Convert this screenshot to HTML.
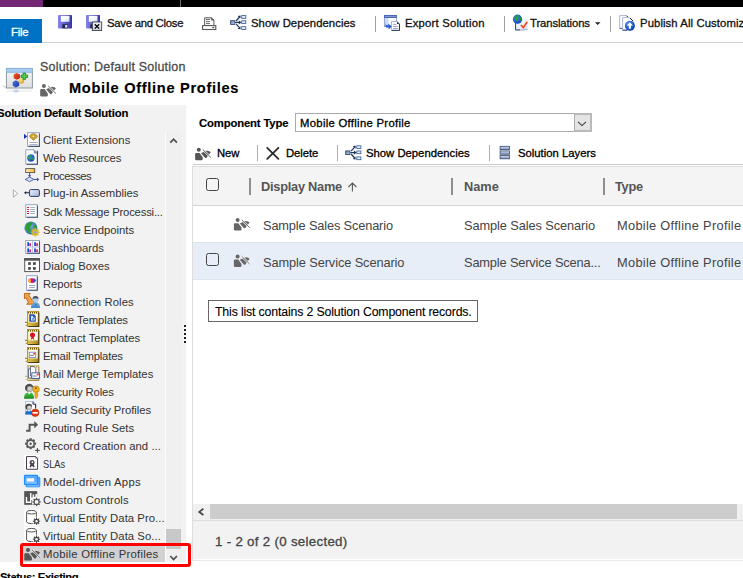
<!DOCTYPE html>
<html><head><meta charset="utf-8"><title>Solution: Default Solution</title>
<style>
html,body{margin:0;padding:0;}
body{width:743px;height:578px;overflow:hidden;position:relative;background:#fff;font-family:"Liberation Sans",sans-serif;}
.t{position:absolute;white-space:nowrap;line-height:20px;height:20px;font-family:"Liberation Sans",sans-serif;}
.b{position:absolute;}
svg{position:absolute;overflow:visible;}

</style></head>
<body>
<!-- top bar -->
<div class="b" style="left:0;top:0;width:43px;height:7px;background:#742774"></div>
<div class="b" style="left:43px;top:0;width:700px;height:7px;background:#000"></div>
<div class="b" style="left:180px;top:0;width:1px;height:7px;background:#6e6e6e"></div>
<!-- ribbon -->
<div class="b" style="left:0;top:19px;width:42px;height:24px;background:#0072c6"></div>
<div class="b" style="left:42px;top:42px;width:701px;height:1px;background:#d2d2d2"></div>
<div class="b" style="left:375px;top:16px;width:1px;height:16px;background:#a0a0a0"></div>
<div class="b" style="left:504px;top:16px;width:1px;height:16px;background:#a0a0a0"></div>
<div class="b" style="left:610px;top:16px;width:1px;height:16px;background:#a0a0a0"></div>
<!-- left nav -->
<div class="b" style="left:0;top:105px;width:186px;height:457px;background:#f2f2f2"></div>
<div class="b" style="left:165px;top:131px;width:1px;height:431px;background:#fcfcfc"></div>
<div class="b" style="left:166px;top:131px;width:16px;height:431px;background:#f0f0f0"></div>
<div class="b" style="left:166px;top:529px;width:15px;height:20px;background:#c8c8c8"></div>
<div class="b" style="left:23px;top:546px;width:142px;height:16px;background:#d1d1d1"></div>
<!-- grid -->
<div class="b" style="left:192px;top:166px;width:1px;height:395px;background:#dedede"></div>
<div class="b" style="left:295px;top:113px;width:295px;height:17px;border:1px solid #ababab;background:#fff"></div>
<div class="b" style="left:574px;top:113px;width:18px;height:19px;background:#e4e4e4;border:2px solid #bababa;border-left:1px solid #adadad;box-sizing:border-box"></div>
<div class="b" style="left:257px;top:145px;width:1px;height:16px;background:#b0b0b0"></div>
<div class="b" style="left:337px;top:145px;width:1px;height:16px;background:#b0b0b0"></div>
<div class="b" style="left:489px;top:145px;width:1px;height:16px;background:#b0b0b0"></div>
<div class="b" style="left:193px;top:164px;width:550px;height:1px;background:#c9c9c9"></div>
<div class="b" style="left:193px;top:166px;width:550px;height:40px;background:#f4f4f4;border-top:1px solid #dcdcdc;border-bottom:1px solid #d4d4d4;box-sizing:border-box"></div>
<div class="b" style="left:206px;top:178px;width:11.4px;height:11.4px;border:1.3px solid #444;border-radius:2.5px"></div>
<div class="b" style="left:249px;top:178px;width:2px;height:17px;background:#8f8f8f"></div>
<div class="b" style="left:451px;top:178px;width:2px;height:17px;background:#8f8f8f"></div>
<div class="b" style="left:603px;top:178px;width:2px;height:17px;background:#8f8f8f"></div>
<div class="b" style="left:193px;top:242px;width:550px;height:38px;background:#e7eef8;border-top:1px solid #dde4ec;border-bottom:1px solid #dde4ec;box-sizing:border-box"></div>
<div class="b" style="left:206px;top:253px;width:11.4px;height:11.4px;border:1.3px solid #444;border-radius:2.5px"></div>
<div class="b" style="left:208px;top:300px;width:268px;height:20px;border:1px solid #666;background:#fff"></div>
<!-- hscroll / footer -->
<div class="b" style="left:193px;top:504px;width:550px;height:16px;background:#f0f0f0"></div>
<div class="b" style="left:210px;top:504px;width:527px;height:15px;background:#cdcdcd"></div>
<div class="b" style="left:193px;top:520px;width:550px;height:39px;background:#f2f2f2;border-top:1px solid #dcdcdc;box-sizing:border-box"></div>
<div class="b" style="left:193px;top:560px;width:550px;height:1px;background:#e9e9e9"></div>

<svg width="743" height="578" viewBox="0 0 743 578" style="left:0;top:0">
<defs>
<linearGradient id="gfl" x1="0" y1="0" x2="1" y2="0"><stop offset="0" stop-color="#8484e6"/><stop offset=".55" stop-color="#5a5ace"/><stop offset="1" stop-color="#3434a0"/></linearGradient>
<linearGradient id="gwh" x1="0" y1="0" x2="1" y2="1"><stop offset="0" stop-color="#ffffff"/><stop offset=".6" stop-color="#f4f6fb"/><stop offset="1" stop-color="#c4cce4"/></linearGradient>
<linearGradient id="gbx" x1="0" y1="0" x2="0" y2="1"><stop offset="0" stop-color="#f6f6f6"/><stop offset="1" stop-color="#c9ccd2"/></linearGradient>
<linearGradient id="gdb" x1="0" y1="0" x2="1" y2="1"><stop offset="0" stop-color="#6782b4"/><stop offset="1" stop-color="#bccbe4"/></linearGradient>
<linearGradient id="gpp" x1="0" y1="0" x2="1" y2="1"><stop offset="0" stop-color="#ffffff"/><stop offset="1" stop-color="#d4e2f6"/></linearGradient>
<radialGradient id="ggl" cx=".4" cy=".35" r=".7"><stop offset="0" stop-color="#4a8af4"/><stop offset="1" stop-color="#0d3fc0"/></radialGradient>
<radialGradient id="ggl2" cx=".4" cy=".35" r=".7"><stop offset="0" stop-color="#86a6f0"/><stop offset="1" stop-color="#3a62cc"/></radialGradient>
<radialGradient id="gpb" cx=".35" cy=".3" r=".8"><stop offset="0" stop-color="#5d94ea"/><stop offset=".6" stop-color="#1a5acc"/><stop offset="1" stop-color="#0a3aa0"/></radialGradient>
<linearGradient id="gwn" x1="0" y1="0" x2="0" y2="1"><stop offset="0" stop-color="#f8f8f8"/><stop offset="1" stop-color="#dedede"/></linearGradient>
<linearGradient id="gtb" x1="0" y1="0" x2="0" y2="1"><stop offset="0" stop-color="#7fb2e4"/><stop offset=".4" stop-color="#b4d5f4"/><stop offset="1" stop-color="#8fbdea"/></linearGradient>
<linearGradient id="grd" x1="0" y1="0" x2="1" y2="1"><stop offset="0" stop-color="#ee5a34"/><stop offset="1" stop-color="#b82408"/></linearGradient>
<linearGradient id="gbl" x1="0" y1="0" x2="1" y2="1"><stop offset="0" stop-color="#4c78e4"/><stop offset="1" stop-color="#1636a8"/></linearGradient>
<radialGradient id="gyl" cx=".35" cy=".3" r=".8"><stop offset="0" stop-color="#ffe680"/><stop offset="1" stop-color="#e09a10"/></radialGradient>
<linearGradient id="gly" x1="0" y1="0" x2="0" y2="1"><stop offset="0" stop-color="#d4e0f4"/><stop offset="1" stop-color="#7d93be"/></linearGradient>
<linearGradient id="gor" x1="0" y1="0" x2="1" y2="0"><stop offset="0" stop-color="#fff2c8"/><stop offset="1" stop-color="#ffb41c"/></linearGradient>
<linearGradient id="gpl" x1="0" y1="0" x2="1" y2="1"><stop offset="0" stop-color="#eef3fc"/><stop offset="1" stop-color="#9fb2d6"/></linearGradient>
<linearGradient id="gps" x1="0" y1="0" x2="0" y2="1"><stop offset="0" stop-color="#86b8e4"/><stop offset="1" stop-color="#3f82c2"/></linearGradient>
<linearGradient id="gnp" x1="0" y1="0" x2="1" y2="1"><stop offset="0" stop-color="#fbf0a4"/><stop offset=".6" stop-color="#ecd058"/><stop offset="1" stop-color="#8a6a14"/></linearGradient>
<linearGradient id="gnp2" x1="0" y1="0" x2="1" y2="1"><stop offset="0" stop-color="#faf0c0"/><stop offset=".6" stop-color="#eedc98"/><stop offset="1" stop-color="#c0a868"/></linearGradient>
<linearGradient id="ggr" x1="0" y1="0" x2="0" y2="1"><stop offset="0" stop-color="#4cc44c"/><stop offset="1" stop-color="#1a8a1a"/></linearGradient>
<radialGradient id="ghd" cx=".55" cy=".55" r=".6"><stop offset="0" stop-color="#e0e0e0"/><stop offset="1" stop-color="#8c8c8c"/></radialGradient>
</defs>
<g transform="translate(58,15)"><rect x="0" y="0" width="14" height="13.6" rx=".8" fill="url(#gfl)"/><rect x="2.8" y=".8" width="8.7" height="6" fill="url(#gwh)"/><rect x="4.3" y="9.3" width="5.6" height="4" fill="#26264a"/><rect x="7.2" y="10" width="2.1" height="2.6" fill="#e8e8f4"/></g>
<g transform="translate(86,15)"><rect x="0" y="0" width="14" height="13.6" rx=".8" fill="url(#gfl)"/><rect x="2.8" y=".8" width="8.7" height="6" fill="url(#gwh)"/><rect x="4.3" y="9.3" width="5.6" height="4" fill="#26264a"/><rect x="7.2" y="10" width="2.1" height="2.6" fill="#e8e8f4"/></g>
<rect x="92.3" y="22" width="9.4" height="8.6" fill="url(#gbx)" stroke="#2a3040" stroke-width=".8"/><path d="M94.8 24.2 L99.2 28.6 M99.2 24.2 L94.8 28.6" stroke="#000" stroke-width="1.3" fill="none"/>
<path d="M204.7 25.2 V17.8 H211.6 L213.9 20 V25.2" fill="#fff" stroke="#555" stroke-width="1"/><path d="M211.4 17.6 V20.2 H214" fill="#777" stroke="#555" stroke-width=".6"/><path d="M206 19.5 H210 M206 21.6 H210 M206 23.6 H210" stroke="#555" stroke-width=".9"/><rect x="202.6" y="25.6" width="13.2" height="3.9" fill="#fff" stroke="#555" stroke-width="1.1"/><rect x="212.2" y="27.1" width="2.1" height="1" fill="#444"/>
<g transform="translate(0,0)"><rect x="230.6" y="20.7" width="4.2" height="3.7" fill="url(#gdb)" stroke="#2a3f66" stroke-width=".8"/><g fill="#e4eefb" stroke="#2f5590" stroke-width=".8"><rect x="241.7" y="15.6" width="4.1" height="2.7"/><rect x="241.7" y="20.8" width="4.1" height="2.7"/><rect x="241.7" y="26.7" width="4.1" height="2.8"/></g><g stroke="#1f3558" stroke-width="1.2" fill="none"><path d="M235.2 22.4 H240.6"/><path d="M236 21 L239.6 17"/><path d="M236 23.8 L239.6 27.8"/></g><g fill="#1f3558"><path d="M238.8 20.2 L241.4 22.4 L238.8 24.6 Z"/><path d="M237.6 15.9 L240.6 15.6 L240.4 18.6 Z"/><path d="M237.6 28.9 L240.6 29.2 L240.4 26.2 Z"/></g></g>
<rect x="384.4" y="15.4" width="12" height="11" fill="#fff" stroke="#7d95c8" stroke-width=".9"/><rect x="384" y="15" width="12.8" height="3" fill="#4a66b0"/><rect x="385" y="16" width="10.8" height=".8" fill="#8fa6dc"/><rect x="384.9" y="18.2" width="3.6" height="7.6" fill="#c9d9f6"/><path d="M391.4 21.6 H397.2 L399.5 23.9 V30.4 H391.4 Z" fill="#fdfdff" stroke="#9aa8c8" stroke-width=".9"/><path d="M399.5 23.9 V30.4 H391.8" fill="none" stroke="#223a5a" stroke-width="1"/><path d="M397 21.4 V24 H399.7 Z" fill="#223a5a"/><path d="M393.2 24.4 H396.4 M393.2 26.5 H397.8 M393.2 28.5 H397.8" stroke="#8a97b8" stroke-width=".9"/><path d="M385.2 24.6 L388.4 25.4 L388.2 23.6 L391.8 26.4 L388.6 29.4 L388.6 27.6 L386 27.4 Z" fill="#2a5bd0"/>
<path d="M515.5 18.8 H527.6 V29.4 Q522 30.4 515.5 29.9 Z" fill="url(#gpp)"/><path d="M515.6 22 V29.9 H520" fill="none" stroke="#1a3a80" stroke-width="1"/><path d="M516 30.2 Q522 30.6 527.6 29.4" stroke="#8a92a0" stroke-width=".7" fill="none"/><path d="M520.9 25 L523.3 27.6 L527.2 21.8" fill="none" stroke="#ff4218" stroke-width="1.6"/><circle cx="517.5" cy="19.2" r="4.6" fill="url(#ggl)"/><path d="M514.6 16.4 Q516.8 14.6 518.6 15.4 Q518.8 17.6 517 18.2 Q516.4 20.4 517.6 21.6 Q516 21.6 515.2 19.6 Q514 18.4 514.6 16.4 Z" fill="#23a51f"/><path d="M519.6 17.4 Q521.2 17 521.8 19 Q521.4 21 519.8 20.6 Q518.8 19 519.6 17.4 Z" fill="#1f9a1c"/>
<path d="M619.6 15.6 H626.2 L628 17.4 V28.3 H619.6 Z" fill="#fff" stroke="#9fb0d4" stroke-width=".9"/><path d="M619.6 28.4 H626" stroke="#44506a" stroke-width=".9"/><path d="M622.6 17.7 H629.6 L633 21 V30.1 H622.6 Z" fill="#fff" stroke="#9fb0d4" stroke-width=".9"/><path d="M622.6 30.2 H627" stroke="#33405a" stroke-width="1"/><path d="M626.5 15.7 L627.9 17.1 M630 18 L633.1 21.1" stroke="#222a3c" stroke-width="1"/><circle cx="629.9" cy="25.7" r="5" fill="url(#gpb)"/><path d="M629.9 22.3 L633 25.5 H631 V28.7 H628.8 V25.5 H626.8 Z" fill="#fff"/>
<path d="M594.9 22.2 H600.5 L597.7 25 Z" fill="#222"/>
<path d="M1 85 L6 86.5 V88.4 Z" fill="#d8d8d8"/><rect x="6.4" y="68.4" width="26" height="19.6" fill="url(#gwn)" stroke="#8d9a9c" stroke-width="1"/><rect x="6.4" y="68.2" width="26" height="4.2" fill="url(#gtb)"/><path d="M6.4 72.6 H32.4" stroke="#7fa6cf" stroke-width=".6"/><rect x="7" y="89.4" width="25" height="2.6" fill="#f2f2f2"/><ellipse cx="16" cy="91" rx="2.6" ry="1.6" fill="#c3cdf0"/><path d="M16.8 73 L20 74.6 V78.2 L16.8 79.8 L13.7 78.2 V74.6 Z" fill="url(#grd)"/><path d="M15.9 80.3 L19.2 82 V85.8 L15.9 87.6 L12.7 85.8 V82 Z" fill="url(#gbl)"/><circle cx="21.2" cy="81" r="2.8" fill="url(#gyl)"/><path d="M23.1 73 H25.6 V75 H27.7 V77.5 H25.6 V79.6 H23.1 V77.5 H21 V75 H23.1 Z" fill="#52c552" stroke="#1f8a2a" stroke-width=".8"/>
<g transform="translate(0,0)" fill="#666"><circle cx="43.9" cy="85.9" r="2"/><path d="M40.2 90 Q40.2 89.1 41.2 89.1 L44.6 89.1 L47.8 93.4 L47.8 95.2 Q47.8 96.4 46.4 96.4 L41.4 96.4 Q40.2 96.4 40.2 95.2 Z"/><path d="M46.1 89.3 L51.2 86.9 Q54.2 86.4 55.9 88.3 L51.4 94.2 L50.3 94.2 Z"/><path d="M47.9 85.7 L56 93.6" stroke="#fff" stroke-width="2.2" stroke-opacity=".75" fill="none"/><path d="M47.9 85.7 L56 93.6" stroke="#666" stroke-width=".9" fill="none"/></g>
<g transform="translate(154.9,63.9)" fill="#555"><circle cx="43.9" cy="85.9" r="2"/><path d="M40.2 90 Q40.2 89.1 41.2 89.1 L44.6 89.1 L47.8 93.4 L47.8 95.2 Q47.8 96.4 46.4 96.4 L41.4 96.4 Q40.2 96.4 40.2 95.2 Z"/><path d="M46.1 89.3 L51.2 86.9 Q54.2 86.4 55.9 88.3 L51.4 94.2 L50.3 94.2 Z"/><path d="M47.9 85.7 L56 93.6" stroke="#fff" stroke-width="2.2" stroke-opacity=".75" fill="none"/><path d="M47.9 85.7 L56 93.6" stroke="#555" stroke-width=".9" fill="none"/></g>
<path d="M267.2 147.8 L278.4 158.8 M278.4 147.8 L267.2 158.8" stroke="#2b2b2b" stroke-width="1.8" fill="none" stroke-linecap="round"/>
<g transform="translate(115.1,130.2)"><rect x="230.6" y="20.7" width="4.2" height="3.7" fill="url(#gdb)" stroke="#2a3f66" stroke-width=".8"/><g fill="#e4eefb" stroke="#2f5590" stroke-width=".8"><rect x="241.7" y="15.6" width="4.1" height="2.7"/><rect x="241.7" y="20.8" width="4.1" height="2.7"/><rect x="241.7" y="26.7" width="4.1" height="2.8"/></g><g stroke="#1f3558" stroke-width="1.2" fill="none"><path d="M235.2 22.4 H240.6"/><path d="M236 21 L239.6 17"/><path d="M236 23.8 L239.6 27.8"/></g><g fill="#1f3558"><path d="M238.8 20.2 L241.4 22.4 L238.8 24.6 Z"/><path d="M237.6 15.9 L240.6 15.6 L240.4 18.6 Z"/><path d="M237.6 28.9 L240.6 29.2 L240.4 26.2 Z"/></g></g>
<rect x="500.1" y="146.3" width="9.4" height="3.3" fill="url(#gly)" stroke="#3a4a68" stroke-width=".8"/>
<rect x="500.1" y="150.9" width="9.4" height="3.3" fill="url(#gly)" stroke="#3a4a68" stroke-width=".8"/>
<rect x="500.1" y="155.5" width="9.4" height="3.3" fill="url(#gly)" stroke="#3a4a68" stroke-width=".8"/>
<path d="M578 121.9 L582 125.6 L586 121.9" stroke="#3c3c3c" stroke-width="1.1" fill="none"/>
<path d="M352.4 191.4 V183 M348.4 187 L352.4 183 L356.4 187" stroke="#555" stroke-width="1.1" fill="none"/>
<g transform="translate(193.7,134.1)" fill="#666"><circle cx="43.9" cy="85.9" r="2"/><path d="M40.2 90 Q40.2 89.1 41.2 89.1 L44.6 89.1 L47.8 93.4 L47.8 95.2 Q47.8 96.4 46.4 96.4 L41.4 96.4 Q40.2 96.4 40.2 95.2 Z"/><path d="M46.1 89.3 L51.2 86.9 Q54.2 86.4 55.9 88.3 L51.4 94.2 L50.3 94.2 Z"/><path d="M47.9 85.7 L56 93.6" stroke="#fff" stroke-width="2.2" stroke-opacity=".75" fill="none"/><path d="M47.9 85.7 L56 93.6" stroke="#666" stroke-width=".9" fill="none"/></g>
<g transform="translate(193.7,170.5)" fill="#666"><circle cx="43.9" cy="85.9" r="2"/><path d="M40.2 90 Q40.2 89.1 41.2 89.1 L44.6 89.1 L47.8 93.4 L47.8 95.2 Q47.8 96.4 46.4 96.4 L41.4 96.4 Q40.2 96.4 40.2 95.2 Z"/><path d="M46.1 89.3 L51.2 86.9 Q54.2 86.4 55.9 88.3 L51.4 94.2 L50.3 94.2 Z"/><path d="M47.9 85.7 L56 93.6" stroke="#fff" stroke-width="2.2" stroke-opacity=".75" fill="none"/><path d="M47.9 85.7 L56 93.6" stroke="#666" stroke-width=".9" fill="none"/></g>
<path d="M203.4 508.8 L199.2 511.9 L203.4 515" stroke="#444" stroke-width="1.7" fill="none"/>
<path d="M170.3 142.6 L173.6 139.2 L176.9 142.6" stroke="#505050" stroke-width="1.8" fill="none"/>
<path d="M170.3 556 L173.6 559.5 L176.9 556" stroke="#505050" stroke-width="1.8" fill="none"/>
<rect x="183.3" y="324.3" width="2.7" height="2.7" fill="#fff"/><rect x="184" y="325" width="2" height="2" fill="#1c1c1c"/>
<rect x="183.3" y="328.3" width="2.7" height="2.7" fill="#fff"/><rect x="184" y="329" width="2" height="2" fill="#1c1c1c"/>
<rect x="183.3" y="332.3" width="2.7" height="2.7" fill="#fff"/><rect x="184" y="333" width="2" height="2" fill="#1c1c1c"/>
<rect x="183.3" y="336.3" width="2.7" height="2.7" fill="#fff"/><rect x="184" y="337" width="2" height="2" fill="#1c1c1c"/>
<rect x="183.3" y="340.3" width="2.7" height="2.7" fill="#fff"/><rect x="184" y="341" width="2" height="2" fill="#1c1c1c"/>
<path d="M24 133.7 L27.2 136.4 L24 139.1 Z" fill="#1a2fb0"/>
<rect x="27.6" y="132.7" width="11.8" height="13.7" fill="#fff" stroke="#8a98b8" stroke-width="0.9"/>
<path d="M39.400000000000006 133.7 V146.39999999999998 H28.6" fill="none" stroke="#44557a" stroke-width="1.1"/>
<path d="M29.6 135.6 Q31 133.6 33.4 133.4 Q35.8 133.6 37.4 135.6 Q37.8 137.8 35.4 138.8 L33.4 140.4 L31.6 138.8 Q29.2 137.8 29.6 135.6 Z" fill="#c9a233" stroke="#8a6a14" stroke-width=".5"/><circle cx="33.4" cy="136.3" r=".9" fill="#fff6d0"/><path d="M29.4 142.5 H37.6 M29.4 144.6 H37.6" stroke="#9aa4bc" stroke-width=".9"/>
<path d="M25.8 149.8 H34.0 L37.4 153.20000000000002 V164.20000000000002 H25.8 Z" fill="#fff" stroke="#8a98b8" stroke-width="0.9"/><path d="M34.0 149.8 V153.20000000000002 H37.4 Z" fill="#8a98b8" stroke="#8a98b8" stroke-width=".5"/>
<path d="M37.4 150.8 V164.20000000000002 H26.8" fill="none" stroke="#3a4a70" stroke-width="1.1"/>
<circle cx="30.9" cy="158" r="3.7" fill="url(#ggl)"/><path d="M28.4 156.4 Q30 154.8 31.6 155.4 Q31.4 157.2 30.2 157.6 Q30 159.4 31 160.6 Q29 160.4 28.4 158.6 Z" fill="#27a822"/><path d="M32.4 157.4 Q33.8 157.2 34.2 158.8 Q33.6 160.4 32.4 160 Z" fill="#27a822"/>
<rect x="25.7" y="168.6" width="9" height="4" fill="url(#gor)" stroke="#555" stroke-width=".9"/><path d="M29.6 172.8 V176.4" stroke="#3a4ab0" stroke-width="1"/><path d="M27.8 175.2 H31.4 L29.6 177.2 Z" fill="#3a4ab0"/><path d="M25.2 179.4 L29.6 177.1 L34 179.4 L29.6 181.7 Z" fill="#dcdcff" stroke="#4a60a0" stroke-width=".9"/><path d="M34 179.4 H38" stroke="#3a4ab0" stroke-width="1"/><path d="M37 177.6 L39.2 179.4 L37 181.2 Z" fill="#3a4ab0"/>
<path d="M13.4 189.8 L17.8 193.5 L13.4 197.2 Z" fill="#fff" stroke="#a6a6a6" stroke-width=".9"/><rect x="29.4" y="189.6" width="10" height="6.8" rx="1.2" fill="url(#gpl)" stroke="#2a3f66" stroke-width="1"/><path d="M25 192.7 H29.4" stroke="#1f3050" stroke-width="1"/><path d="M26.2 190.9 L24 192.7 L26.2 194.5 Z" fill="#1f3050"/>
<rect x="25.8" y="204.7" width="11.6" height="12.6" fill="#fff" stroke="#8a98b8" stroke-width="0.9"/>
<path d="M37.4 205.7 V217.29999999999998 H26.8" fill="none" stroke="#44557a" stroke-width="1.1"/>
<rect x="27" y="206.95" width="2" height=".9" fill="#e8000c"/><rect x="30.2" y="207.00" width="4.8" height=".8" fill="#8a9bbd"/>
<rect x="27" y="208.98" width="2" height=".9" fill="#e8000c"/><rect x="30.2" y="209.03" width="4.8" height=".8" fill="#8a9bbd"/>
<rect x="27" y="211.01" width="2" height=".9" fill="#e8000c"/><rect x="30.2" y="211.06" width="4.8" height=".8" fill="#8a9bbd"/>
<rect x="27" y="213.04" width="2" height=".9" fill="#e8000c"/><rect x="30.2" y="213.09" width="4.8" height=".8" fill="#8a9bbd"/>
<circle cx="30.9" cy="227.9" r="6.5" fill="url(#ggl2)"/><path d="M26 224.6 Q29 221.6 32.6 222.2 Q33.4 224.4 31 225.2 Q29.6 227.4 30.6 229.6 Q30 232 31.4 233.6 Q28 233.4 26.4 230.4 Q24.8 227.4 26 224.6 Z" fill="#2aa030"/><path d="M34 224.6 Q36.6 225 37.2 227.6 Q36.4 229.6 34.6 229 Q33 226.8 34 224.6 Z" fill="#2aa030"/>
<g transform="translate(35.3,232.3)"><rect x="-0.85" y="-4.20" width="1.7" height="2.10" fill="#e0b81e" transform="rotate(0.0)"/><rect x="-0.85" y="-4.20" width="1.7" height="2.10" fill="#e0b81e" transform="rotate(45.0)"/><rect x="-0.85" y="-4.20" width="1.7" height="2.10" fill="#e0b81e" transform="rotate(90.0)"/><rect x="-0.85" y="-4.20" width="1.7" height="2.10" fill="#e0b81e" transform="rotate(135.0)"/><rect x="-0.85" y="-4.20" width="1.7" height="2.10" fill="#e0b81e" transform="rotate(180.0)"/><rect x="-0.85" y="-4.20" width="1.7" height="2.10" fill="#e0b81e" transform="rotate(225.0)"/><rect x="-0.85" y="-4.20" width="1.7" height="2.10" fill="#e0b81e" transform="rotate(270.0)"/><rect x="-0.85" y="-4.20" width="1.7" height="2.10" fill="#e0b81e" transform="rotate(315.0)"/><circle r="3.1" fill="#e0b81e"/><circle r="1.4" fill="#8aa4e6"/></g>
<rect x="25.7" y="240.6" width="13.8" height="12.7" fill="#fff" stroke="#8a9ab8" stroke-width=".9"/>
<path d="M39.5 241.6 V253.29999999999998 H26.7" fill="none" stroke="#44557a" stroke-width="1.1"/>
<path d="M32.6 240.8 V253.2 M25.8 247 H39.4" stroke="#9fb0cc" stroke-width=".8"/>
<rect x="27.3" y="242.2" width="1.7" height="3.8" fill="#1f3fd0"/><rect x="29.3" y="243.2" width="1.7" height="2.8" fill="#d0206e"/>
<rect x="27.3" y="248.4" width="1.7" height="3.8" fill="#1f3fd0"/><rect x="29.3" y="249.4" width="1.7" height="2.8" fill="#d0206e"/>
<rect x="34.2" y="242.2" width="1.7" height="3.8" fill="#1f3fd0"/><rect x="36.2" y="243.2" width="1.7" height="2.8" fill="#d0206e"/>
<rect x="34.2" y="248.4" width="1.7" height="3.8" fill="#1f3fd0"/><rect x="36.2" y="249.4" width="1.7" height="2.8" fill="#d0206e"/>
<rect x="24" y="256.8" width="16" height="16" fill="#fafafa"/><rect x="24.7" y="258.6" width="14.8" height="13" fill="#fff" stroke="#555" stroke-width="1"/><rect x="24.2" y="258.1" width="15.8" height="2.6" fill="#555"/>
<rect x="28.1" y="262.2" width="2.8" height="2.7" fill="#4a4a4a"/>
<rect x="28.1" y="267.1" width="2.8" height="2.7" fill="#4a4a4a"/>
<rect x="33" y="262.2" width="2.8" height="2.7" fill="#4a4a4a"/>
<rect x="33" y="267.1" width="2.8" height="2.7" fill="#4a4a4a"/>
<rect x="26.6" y="275.7" width="10.7" height="14.6" fill="#fff" stroke="#8a98b8" stroke-width="0.9"/>
<path d="M37.3 276.7 V290.3 H27.6" fill="none" stroke="#44557a" stroke-width="1.1"/>
<ellipse cx="31.9" cy="280.6" rx="3.8" ry="2.3" fill="#e0107a"/><path d="M28.1 280.6 A3.8 2.3 0 0 1 30.4 278.5 L31 282.8 A3.8 2.3 0 0 1 28.1 280.6 Z" fill="#f2c21a"/><path d="M35.7 280.6 A3.8 2.3 0 0 0 33.6 278.6 L33.2 282.7 A3.8 2.3 0 0 0 35.7 280.6 Z" fill="#2a55d0"/><path d="M29 285.5 H35 M29 287.6 H35" stroke="#8a9bbd" stroke-width=".9"/>
<path d="M24.4 293.4 H30.4 L28.8 295.2 L32.2 300.2 L33.6 298.8 V304.2 H26.6 L28.4 302.6 L25.8 297.6 L24.4 299 Z" fill="#f4a040" stroke="#a8560e" stroke-width=".8"/><path d="M31 308 Q31 302.4 35.5 302 Q40 302.4 40 308 Z" fill="url(#gps)"/><circle cx="35.5" cy="299.2" r="3" fill="#a9cdec"/><path d="M32.5 299 A3 3 0 0 1 38.5 299 Q35.5 297.4 32.5 299 Z" fill="#4a5058"/><path d="M34.6 303.4 L35.8 305.6 L37 303.4" stroke="#2d6aa6" stroke-width=".7" fill="none"/>
<path d="M25 322.4 H27.6 M25.6 325.2 H27.6" stroke="#a8861c" stroke-width="1.1"/><rect x="27.4" y="311.4" width="11.3" height="15" fill="url(#gnp)" stroke="#a8861c" stroke-width=".8"/><path d="M38.8 312.4 V326.5 H28.4" stroke="#4a3a10" stroke-width="1.1" fill="none"/><rect x="28.6" y="314" width="9" height="8.4" fill="#fffdf2"/><path d="M28 312.8 H38.2" stroke="#6a5410" stroke-width="1.6" stroke-dasharray="1 1" /><path d="M27.6 323.2 H37.8 M27.6 324.8 H37.8" stroke="#a8861c" stroke-width=".6"/>
<path d="M29.2 314.2 H34 L35.8 316 V321.8 H29.2 Z" fill="#2a55c0"/><path d="M31 316 H33 V317.4 H34.6 V320.6 H31 Z" fill="#dfe8fb"/><rect x="32" y="318" width="1.8" height="1.8" fill="#6a8ee0"/>
<path d="M25 340.4 H27.6 M25.6 343.2 H27.6" stroke="#a8861c" stroke-width="1.1"/><rect x="27.4" y="329.4" width="11.3" height="15" fill="url(#gnp)" stroke="#a8861c" stroke-width=".8"/><path d="M38.8 330.4 V344.5 H28.4" stroke="#4a3a10" stroke-width="1.1" fill="none"/><rect x="28.6" y="332" width="9" height="8.4" fill="#fffdf2"/><path d="M28 330.8 H38.2" stroke="#6a5410" stroke-width="1.6" stroke-dasharray="1 1" /><path d="M27.6 341.2 H37.8 M27.6 342.8 H37.8" stroke="#a8861c" stroke-width=".6"/>
<circle cx="32.5" cy="335" r="2.5" fill="#e01020"/><path d="M31.6 337 L30.6 340.2 L32.4 338.6 L34.4 340.2 L33.4 337 Z" fill="#c80c1a"/>
<path d="M25 358.4 H27.6 M25.6 361.2 H27.6" stroke="#a8861c" stroke-width="1.1"/><rect x="27.4" y="347.4" width="11.3" height="15" fill="url(#gnp)" stroke="#a8861c" stroke-width=".8"/><path d="M38.8 348.4 V362.5 H28.4" stroke="#4a3a10" stroke-width="1.1" fill="none"/><rect x="28.6" y="350" width="9" height="8.4" fill="#fffdf2"/><path d="M28 348.8 H38.2" stroke="#6a5410" stroke-width="1.6" stroke-dasharray="1 1" /><path d="M27.6 359.2 H37.8 M27.6 360.8 H37.8" stroke="#a8861c" stroke-width=".6"/>
<rect x="29.2" y="352.2" width="6.6" height="5.2" fill="#f6f8ff" stroke="#6080c0" stroke-width=".8"/><rect x="33.4" y="353" width="1.8" height="1.6" fill="#e83020"/><path d="M30.2 355.4 H33.4" stroke="#556" stroke-width=".8"/>
<path d="M25 376.4 H27.6 M25.6 379.2 H27.6" stroke="#c8b070" stroke-width="1.1"/><rect x="27.4" y="365.4" width="11.3" height="15" fill="url(#gnp2)" stroke="#c8b070" stroke-width=".8"/><path d="M38.8 366.4 V380.5 H28.4" stroke="#a09060" stroke-width="1.1" fill="none"/><rect x="28.6" y="368" width="9" height="8.4" fill="#fffdf2"/><path d="M28 366.8 H38.2" stroke="#6a5410" stroke-width="1.6" stroke-dasharray="1 1" opacity='.5'/><path d="M27.6 377.2 H37.8 M27.6 378.8 H37.8" stroke="#c8b070" stroke-width=".6"/>
<path d="M28.4 368.8 H32 V378 H28.4 Z" fill="#fff" stroke="#33466e" stroke-width=".8"/><path d="M30.4 366.6 H34 L35.8 368.4 V376 H30.4 Z" fill="#fff" stroke="#33466e" stroke-width=".8"/><rect x="31.8" y="372.8" width="7.8" height="5.6" fill="#f4f7ff" stroke="#3a5a9a" stroke-width=".9"/><rect x="36.8" y="373.6" width="2" height="1.7" fill="#e83020"/><path d="M33 376 H36.6" stroke="#667" stroke-width=".8"/>
<path d="M24 398.7 Q24 393 28 392.4 L29.3 394.4 L30.6 392.4 Q34 393 34 398.7 Z" fill="url(#ggr)"/><circle cx="29.3" cy="388" r="4.2" fill="url(#ghd)"/><path d="M25.1 388.4 A4.2 4.2 0 0 1 33.5 388 Q31 385.4 27.6 386.6 Q26.6 389.6 27.4 391.4 Q25.2 390.6 25.1 388.4 Z" fill="#4a4a4a"/><path d="M28.2 392.6 L29.3 394.6 L30.4 392.6 Z" fill="#fff"/><circle cx="36" cy="389.2" r="3.3" fill="#f0b21c" stroke="#b07808" stroke-width=".6"/><circle cx="36" cy="388.2" r=".9" fill="#7a5200"/><path d="M35 392 H37.2 V393.4 L38.2 394 L37.2 394.8 L38.2 395.8 L37.2 396.6 V397.6 L36.1 398.6 L35 397.6 Z" fill="#f0b21c" stroke="#b07808" stroke-width=".5"/>
<path d="M25.6 401.6 H33 L35.6 404.2 V414.2 H25.6 Z" fill="#fff" stroke="#a0b8e0" stroke-width=".9"/><path d="M33 401.6 V404.2 H35.6" fill="none" stroke="#1d2d50" stroke-width="1"/><path d="M35.6 404.2 V408.4" stroke="#1d2d50" stroke-width="1"/><path d="M25.2 414.4 Q25.2 410.8 28 410.6 L28.9 412 L29.8 410.6 Q32.6 410.8 32.6 414.4 Z" fill="#1a70d0"/><circle cx="28.8" cy="407" r="3.3" fill="url(#ghd)"/><path d="M25.5 407.2 A3.3 3.3 0 0 1 32.1 407 Q30 404.9 27.4 405.9 Q26.7 408.2 27.3 409.7 Q25.6 409 25.5 407.2 Z" fill="#444"/><circle cx="35.2" cy="412.8" r="3.8" fill="#e2340f" stroke="#b82408" stroke-width=".5"/><rect x="32.6" y="412" width="5.2" height="1.7" fill="#fff"/>
<path d="M26.1 430.8 H29.6 V424.8 H35" fill="none" stroke="#555" stroke-width="1.9"/><path d="M34.3 421 L38.1 424.8 L34.3 428.6 Z" fill="#555"/>
<g transform="translate(30.6,443.7)"><rect x="-1.1" y="-5.50" width="2.2" height="2.00" fill="#5a5a5a" transform="rotate(0.0)"/><rect x="-1.1" y="-5.50" width="2.2" height="2.00" fill="#5a5a5a" transform="rotate(45.0)"/><rect x="-1.1" y="-5.50" width="2.2" height="2.00" fill="#5a5a5a" transform="rotate(90.0)"/><rect x="-1.1" y="-5.50" width="2.2" height="2.00" fill="#5a5a5a" transform="rotate(135.0)"/><rect x="-1.1" y="-5.50" width="2.2" height="2.00" fill="#5a5a5a" transform="rotate(180.0)"/><rect x="-1.1" y="-5.50" width="2.2" height="2.00" fill="#5a5a5a" transform="rotate(225.0)"/><rect x="-1.1" y="-5.50" width="2.2" height="2.00" fill="#5a5a5a" transform="rotate(270.0)"/><rect x="-1.1" y="-5.50" width="2.2" height="2.00" fill="#5a5a5a" transform="rotate(315.0)"/><circle r="4.5" fill="#5a5a5a"/><circle r="2.8" fill="#f2f2f2"/></g>
<circle cx="30.6" cy="443.7" r="1.2" fill="#5a5a5a"/><path d="M35 450.4 H39.8 M37.4 448 V452.8" stroke="#444" stroke-width="1"/>
<rect x="24" y="455" width="16" height="16" fill="#fff"/><path d="M26.5 456.6 H35.8 L37.6 458.4 V469.3 H26.5 Z" fill="#fff" stroke="#4a3a4a" stroke-width="1"/><path d="M35.6 456.4 V458.6 H37.8" fill="#4a3a4a"/><circle cx="32.1" cy="462.4" r="2.5" fill="#4f424f"/><circle cx="32.4" cy="462.2" r=".9" fill="#fff"/><path d="M31 464.4 L30.2 467.2 M33.2 464.4 L34 467.2 M32.1 464.8 V466.4" stroke="#4a3a4a" stroke-width="1.3"/>
<rect x="26" y="477.2" width="13.8" height="9.6" rx=".6" fill="#4da3ff" stroke="#1e90ff" stroke-width=".9"/><rect x="24.5" y="475.4" width="13" height="9" rx=".6" fill="#5aaaff" stroke="#1e90ff" stroke-width="1.2"/><path d="M25.5 483 H37" stroke="#fff" stroke-width=".6" opacity=".8"/><path d="M27 485.8 H39" stroke="#fff" stroke-width=".5" opacity=".7"/><rect x="26.6" y="478.3" width="7.6" height="3.3" fill="#fdf6ee"/>
<rect x="24.2" y="491.1" width="13" height="13.7" fill="#555"/><path d="M25.8 497 H27.2 V501.4 H30 V493 H31.4 V497.6 H32.6 V494.6 H34 V496.8 H35.4 V494 H37.2 V500 H31 V503 H25.8 Z" fill="#fff"/><circle cx="36.5" cy="501.8" r="5" fill="#f2f2f2"/>
<g transform="translate(36.6,501.9)"><rect x="-0.6" y="-4.20" width="1.2" height="2.10" fill="#555" transform="rotate(0.0)"/><rect x="-0.6" y="-4.20" width="1.2" height="2.10" fill="#555" transform="rotate(45.0)"/><rect x="-0.6" y="-4.20" width="1.2" height="2.10" fill="#555" transform="rotate(90.0)"/><rect x="-0.6" y="-4.20" width="1.2" height="2.10" fill="#555" transform="rotate(135.0)"/><rect x="-0.6" y="-4.20" width="1.2" height="2.10" fill="#555" transform="rotate(180.0)"/><rect x="-0.6" y="-4.20" width="1.2" height="2.10" fill="#555" transform="rotate(225.0)"/><rect x="-0.6" y="-4.20" width="1.2" height="2.10" fill="#555" transform="rotate(270.0)"/><rect x="-0.6" y="-4.20" width="1.2" height="2.10" fill="#555" transform="rotate(315.0)"/><circle r="3.1" fill="#555"/><circle r="1.9" fill="#fff"/></g>
<rect x="24" y="509.0" width="16" height="16.4" fill="#fff"/><path d="M26.6 512.2 V521.8 A4.9 1.8 0 0 0 36.4 521.8 V512.2" fill="none" stroke="#555" stroke-width="1"/><ellipse cx="31.5" cy="512.2" rx="4.9" ry="1.8" fill="#fff" stroke="#555" stroke-width="1"/><circle cx="36.5" cy="521.2" r="4.4" fill="#fff"/>
<g transform="translate(36.5,521.2)"><rect x="-0.55" y="-3.70" width="1.1" height="2.20" fill="#444" transform="rotate(0.0)"/><rect x="-0.55" y="-3.70" width="1.1" height="2.20" fill="#444" transform="rotate(45.0)"/><rect x="-0.55" y="-3.70" width="1.1" height="2.20" fill="#444" transform="rotate(90.0)"/><rect x="-0.55" y="-3.70" width="1.1" height="2.20" fill="#444" transform="rotate(135.0)"/><rect x="-0.55" y="-3.70" width="1.1" height="2.20" fill="#444" transform="rotate(180.0)"/><rect x="-0.55" y="-3.70" width="1.1" height="2.20" fill="#444" transform="rotate(225.0)"/><rect x="-0.55" y="-3.70" width="1.1" height="2.20" fill="#444" transform="rotate(270.0)"/><rect x="-0.55" y="-3.70" width="1.1" height="2.20" fill="#444" transform="rotate(315.0)"/><circle r="2.5" fill="#444"/><circle r="1.2" fill="#fff"/></g>
<rect x="24" y="527.0" width="16" height="16.4" fill="#fff"/><path d="M26.6 530.2 V539.8000000000001 A4.9 1.8 0 0 0 36.4 539.8000000000001 V530.2" fill="none" stroke="#555" stroke-width="1"/><ellipse cx="31.5" cy="530.2" rx="4.9" ry="1.8" fill="#fff" stroke="#555" stroke-width="1"/><circle cx="36.5" cy="539.2" r="4.4" fill="#fff"/>
<g transform="translate(36.5,539.2)"><rect x="-0.55" y="-3.70" width="1.1" height="2.20" fill="#444" transform="rotate(0.0)"/><rect x="-0.55" y="-3.70" width="1.1" height="2.20" fill="#444" transform="rotate(45.0)"/><rect x="-0.55" y="-3.70" width="1.1" height="2.20" fill="#444" transform="rotate(90.0)"/><rect x="-0.55" y="-3.70" width="1.1" height="2.20" fill="#444" transform="rotate(135.0)"/><rect x="-0.55" y="-3.70" width="1.1" height="2.20" fill="#444" transform="rotate(180.0)"/><rect x="-0.55" y="-3.70" width="1.1" height="2.20" fill="#444" transform="rotate(225.0)"/><rect x="-0.55" y="-3.70" width="1.1" height="2.20" fill="#444" transform="rotate(270.0)"/><rect x="-0.55" y="-3.70" width="1.1" height="2.20" fill="#444" transform="rotate(315.0)"/><circle r="2.5" fill="#444"/><circle r="1.2" fill="#fff"/></g>
<g transform="translate(-15.9,464.2)" fill="#555"><circle cx="43.9" cy="85.9" r="2"/><path d="M40.2 90 Q40.2 89.1 41.2 89.1 L44.6 89.1 L47.8 93.4 L47.8 95.2 Q47.8 96.4 46.4 96.4 L41.4 96.4 Q40.2 96.4 40.2 95.2 Z"/><path d="M46.1 89.3 L51.2 86.9 Q54.2 86.4 55.9 88.3 L51.4 94.2 L50.3 94.2 Z"/><path d="M47.9 85.7 L56 93.6" stroke="#fff" stroke-width="2.2" stroke-opacity=".75" fill="none"/><path d="M47.9 85.7 L56 93.6" stroke="#555" stroke-width=".9" fill="none"/></g>
</svg>
<span class="t" style="left:11px;top:22px;font-size:11.3px;font-weight:400;color:#fff;-webkit-text-stroke:0.3px;letter-spacing:-0.20px;">File</span>
<span class="t" style="left:107px;top:13px;font-size:11.3px;font-weight:400;color:#111;-webkit-text-stroke:0.3px;letter-spacing:-0.25px;">Save and Close</span>
<span class="t" style="left:251px;top:13px;font-size:11.3px;font-weight:400;color:#111;-webkit-text-stroke:0.3px;letter-spacing:0.05px;">Show Dependencies</span>
<span class="t" style="left:405px;top:13px;font-size:11.3px;font-weight:400;color:#111;-webkit-text-stroke:0.3px;letter-spacing:0.20px;">Export Solution</span>
<span class="t" style="left:530px;top:13px;font-size:11.3px;font-weight:400;color:#111;-webkit-text-stroke:0.3px;letter-spacing:-0.10px;">Translations</span>
<span class="t" style="left:640px;top:13px;font-size:11.3px;font-weight:400;color:#111;-webkit-text-stroke:0.3px;letter-spacing:0.10px;">Publish All Customizations</span>
<span class="t" style="left:40px;top:57px;font-size:12.5px;font-weight:400;color:#4a4a4a;-webkit-text-stroke:0.3px;letter-spacing:0.20px;">Solution: Default Solution</span>
<span class="t" style="left:69px;top:78px;font-size:14.6px;font-weight:700;color:#000;-webkit-text-stroke:0.15px;letter-spacing:0.70px;">Mobile Offline Profiles</span>
<span class="t" style="left:-3px;top:103px;font-size:11.3px;font-weight:700;color:#000;-webkit-text-stroke:0.15px;letter-spacing:-0.15px;">Solution Default Solution</span>
<span class="t" style="left:199px;top:113px;font-size:11.3px;font-weight:700;color:#000;-webkit-text-stroke:0.15px;letter-spacing:-0.15px;">Component Type</span>
<span class="t" style="left:300px;top:113px;font-size:11.3px;font-weight:400;color:#000;-webkit-text-stroke:0.3px;letter-spacing:0.30px;">Mobile Offline Profile</span>
<span class="t" style="left:217px;top:143px;font-size:11.3px;font-weight:400;color:#000;-webkit-text-stroke:0.3px;letter-spacing:-0.15px;">New</span>
<span class="t" style="left:286px;top:143px;font-size:11.3px;font-weight:400;color:#000;-webkit-text-stroke:0.3px;letter-spacing:-0.05px;">Delete</span>
<span class="t" style="left:366px;top:143px;font-size:11.3px;font-weight:400;color:#000;-webkit-text-stroke:0.3px;">Show Dependencies</span>
<span class="t" style="left:518px;top:143px;font-size:11.3px;font-weight:400;color:#000;-webkit-text-stroke:0.3px;">Solution Layers</span>
<span class="t" style="left:261px;top:177px;font-size:12.8px;font-weight:700;color:#555;letter-spacing:-0.25px;">Display Name</span>
<span class="t" style="left:464px;top:177px;font-size:12.8px;font-weight:700;color:#555;">Name</span>
<span class="t" style="left:615px;top:177px;font-size:12.8px;font-weight:700;color:#555;letter-spacing:-0.30px;">Type</span>
<span class="t" style="left:263px;top:216px;font-size:12.8px;font-weight:400;color:#444;letter-spacing:-0.15px;">Sample Sales Scenario</span>
<span class="t" style="left:464px;top:216px;font-size:12.8px;font-weight:400;color:#444;letter-spacing:-0.10px;">Sample Sales Scenario</span>
<span class="t" style="left:617px;top:216px;font-size:12.8px;font-weight:400;color:#444;letter-spacing:0.30px;">Mobile Offline Profile</span>
<span class="t" style="left:263px;top:253px;font-size:12.8px;font-weight:400;color:#444;letter-spacing:-0.10px;">Sample Service Scenario</span>
<span class="t" style="left:464px;top:253px;font-size:12.8px;font-weight:400;color:#444;letter-spacing:-0.15px;">Sample Service Scena...</span>
<span class="t" style="left:617px;top:253px;font-size:12.8px;font-weight:400;color:#444;letter-spacing:0.30px;">Mobile Offline Profile</span>
<span class="t" style="left:215px;top:302px;font-size:12.3px;font-weight:400;color:#000;-webkit-text-stroke:0.1px;letter-spacing:-0.15px;">This list contains 2 Solution Component records.</span>
<span class="t" style="left:215px;top:532px;font-size:13.3px;font-weight:400;color:#444;-webkit-text-stroke:0.3px;letter-spacing:0.30px;">1 - 2 of 2 (0 selected)</span>
<span class="t" style="left:0px;top:567px;font-size:11.3px;font-weight:700;color:#000;-webkit-text-stroke:0.15px;letter-spacing:-0.45px;">Status: Existing</span>
<span class="t" style="left:43px;top:130px;font-size:11.3px;font-weight:400;color:#333;">Client Extensions</span>
<span class="t" style="left:43px;top:148px;font-size:11.3px;font-weight:400;color:#333;letter-spacing:-0.15px;">Web Resources</span>
<span class="t" style="left:43px;top:166px;font-size:11.3px;font-weight:400;color:#333;letter-spacing:-0.50px;">Processes</span>
<span class="t" style="left:43px;top:183px;font-size:11.3px;font-weight:400;color:#333;">Plug-in Assemblies</span>
<span class="t" style="left:43px;top:202px;font-size:11.3px;font-weight:400;color:#333;letter-spacing:-0.20px;">Sdk Message Processi...</span>
<span class="t" style="left:43px;top:220px;font-size:11.3px;font-weight:400;color:#333;">Service Endpoints</span>
<span class="t" style="left:43px;top:238px;font-size:11.3px;font-weight:400;color:#333;">Dashboards</span>
<span class="t" style="left:43px;top:256px;font-size:11.3px;font-weight:400;color:#333;">Dialog Boxes</span>
<span class="t" style="left:43px;top:274px;font-size:11.3px;font-weight:400;color:#333;letter-spacing:-0.05px;">Reports</span>
<span class="t" style="left:43px;top:292px;font-size:11.3px;font-weight:400;color:#333;letter-spacing:0.10px;">Connection Roles</span>
<span class="t" style="left:43px;top:310px;font-size:11.3px;font-weight:400;color:#333;letter-spacing:-0.05px;">Article Templates</span>
<span class="t" style="left:43px;top:328px;font-size:11.3px;font-weight:400;color:#333;">Contract Templates</span>
<span class="t" style="left:43px;top:346px;font-size:11.3px;font-weight:400;color:#333;letter-spacing:-0.20px;">Email Templates</span>
<span class="t" style="left:43px;top:364px;font-size:11.3px;font-weight:400;color:#333;">Mail Merge Templates</span>
<span class="t" style="left:43px;top:382px;font-size:11.3px;font-weight:400;color:#333;letter-spacing:-0.15px;">Security Roles</span>
<span class="t" style="left:43px;top:400px;font-size:11.3px;font-weight:400;color:#333;letter-spacing:-0.05px;">Field Security Profiles</span>
<span class="t" style="left:43px;top:418px;font-size:11.3px;font-weight:400;color:#333;">Routing Rule Sets</span>
<span class="t" style="left:43px;top:436px;font-size:11.3px;font-weight:400;color:#333;letter-spacing:0.05px;">Record Creation and ...</span>
<span class="t" style="left:43px;top:454px;font-size:11.3px;font-weight:400;color:#333;transform:scaleX(0.820);transform-origin:0 0;">SLAs</span>
<span class="t" style="left:43px;top:472px;font-size:11.3px;font-weight:400;color:#333;letter-spacing:0.25px;">Model-driven Apps</span>
<span class="t" style="left:43px;top:490px;font-size:11.3px;font-weight:400;color:#333;letter-spacing:0.10px;">Custom Controls</span>
<span class="t" style="left:43px;top:508px;font-size:11.3px;font-weight:400;color:#333;letter-spacing:0.05px;">Virtual Entity Data Pro...</span>
<span class="t" style="left:43px;top:526px;font-size:11.3px;font-weight:400;color:#333;letter-spacing:0.05px;">Virtual Entity Data So...</span>
<span class="t" style="left:43px;top:544px;font-size:11.3px;font-weight:400;color:#333;letter-spacing:0.25px;">Mobile Offline Profiles</span>
<div class="b" style="left:20px;top:543px;width:165px;height:18px;border:3px solid #fe0000;border-radius:3px"></div>

</body></html>
